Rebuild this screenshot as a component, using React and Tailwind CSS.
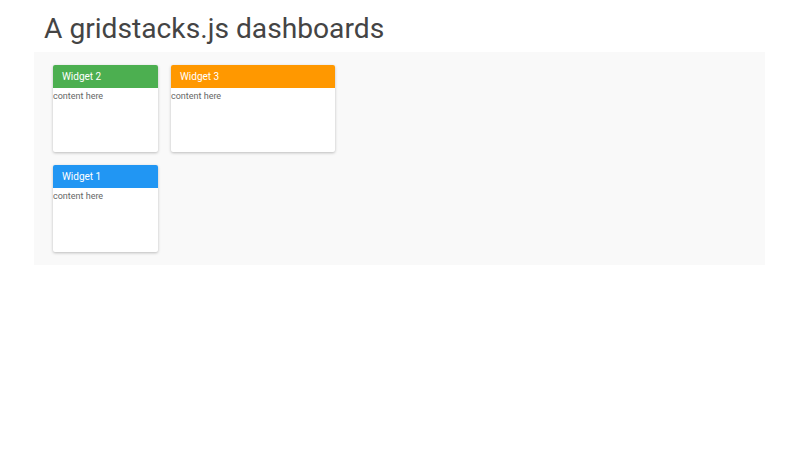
const widgets = [
    { name: 'Widget 2', color: 'bg-[#4caf50]', cell: 'col-start-1 row-start-1' },
    { name: 'Widget 3', color: 'bg-[#ff9800]', cell: 'col-start-2 row-start-1' },
    { name: 'Widget 1', color: 'bg-[#2196f3]', cell: 'col-start-1 row-start-2' },
];

const App = () => {
    return (
        <div className="min-h-[450px] bg-white pt-[13px]" style={{ fontFamily: 'Roboto, "Liberation Sans", sans-serif' }}>
            <h1 className="ml-[44px] text-[28.2px] leading-[32px] font-normal text-[#444]">A gridstacks.js dashboards</h1>
            <div className="ml-[34px] mt-[7px] w-[731px] bg-[#f9f9f9] pl-[19px] py-[13px]">
                <div className="grid grid-cols-[105px_164px] grid-rows-[87px_87px] gap-[13px]">
                    {widgets.map((w) => (
                        <div key={w.name} className={`${w.cell} bg-white rounded-[2px] shadow-[0_1px_3px_rgba(0,0,0,0.25)] overflow-hidden`}>
                            <div className={`${w.color} h-[23px] flex items-center pl-[9px] text-[10px] text-white`}>
                                {w.name}
                            </div>
                            <p className="text-[9px] leading-[12px] text-[#666] pt-[2px]">content here</p>
                        </div>
                    ))}
                </div>
            </div>
        </div>
    );
};

export default App;
